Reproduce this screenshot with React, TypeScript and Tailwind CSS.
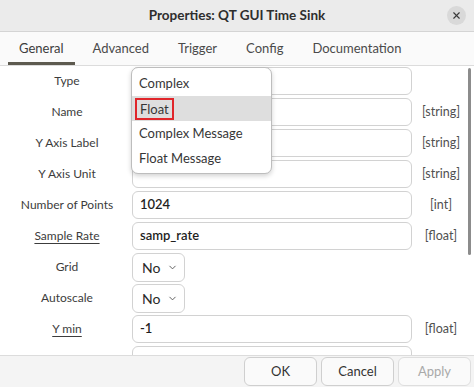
import { ChevronDown, X } from 'lucide-react'

type Row = {
  label: string
  kind: 'input' | 'select'
  value?: string
  tag?: string
  underline?: boolean
}

const rows: Row[] = [
  { label: 'Type', kind: 'input', value: '' },
  { label: 'Name', kind: 'input', value: '', tag: '[string]' },
  { label: 'Y Axis Label', kind: 'input', value: '', tag: '[string]' },
  { label: 'Y Axis Unit', kind: 'input', value: '', tag: '[string]' },
  { label: 'Number of Points', kind: 'input', value: '1024', tag: '[int]' },
  { label: 'Sample Rate', kind: 'input', value: 'samp_rate', tag: '[float]', underline: true },
  { label: 'Grid', kind: 'select', value: 'No' },
  { label: 'Autoscale', kind: 'select', value: 'No' },
  { label: 'Y min', kind: 'input', value: '-1', tag: '[float]', underline: true },
  // next row sits under the button bar, only the top of its field shows
  { label: '', kind: 'input', value: '' },
]

const tabs = ['General', 'Advanced', 'Trigger', 'Config', 'Documentation']

const menuItems = ['Complex', 'Float', 'Complex Message', 'Float Message']

export default function App() {
  return (
    <div className="w-[474px] h-[387px] flex flex-col overflow-hidden bg-white text-[12px] text-[#3c3c3c] font-['Lato','Noto_Sans',sans-serif]">
      {/* title bar */}
      <div className="h-[32px] shrink-0 flex items-center bg-[#ebebeb] border-b border-[#d4d4d4]">
        <div className="w-[40px]" />
        <div className="flex-1 text-center font-bold text-[13.5px] text-[#2e2e2e]">
          Properties: QT GUI Time Sink
        </div>
        <div className="w-[40px] flex justify-center pl-[4px]">
          <div className="w-[19px] h-[19px] rounded-full bg-[#d9d9d9] flex items-center justify-center">
            <X className="w-[11px] h-[11px] text-[#3a3a3a]" strokeWidth={2.5} />
          </div>
        </div>
      </div>

      {/* tabs */}
      <div className="h-[34px] shrink-0 flex items-stretch pl-[8px] gap-[7px] bg-[#fafafa] border-b border-[#dcdcdc]">
        {tabs.map((t, i) => (
          <div
            key={t}
            className={`px-[11px] flex items-center border-b-[3px] pt-[3px] text-[13px] ${
              i === 0 ? 'border-[#5d5a4f] text-[#3d3d3d]' : 'border-transparent text-[#4a4a4a]'
            }`}
          >
            {t}
          </div>
        ))}
      </div>

      {/* content */}
      <div className="relative flex-1 overflow-hidden pt-[1px]">
        <div className="flex flex-col gap-[3px]">
          {rows.map((r, i) => (
            <div key={i} className="flex items-center h-[28px]">
              <div className="w-[132px] pl-[2px] text-center">
                <span className={r.underline ? 'underline underline-offset-[3px]' : ''}>{r.label}</span>
              </div>
              {r.kind === 'input' ? (
                <div className="w-[280px] h-[28px] rounded-[6px] border border-[#d2d2d2] bg-white flex items-center px-[7px] text-[13px] text-[#1f1f1f] font-semibold">
                  {r.value}
                </div>
              ) : (
                <div className="w-[53px] h-[29px] rounded-[6px] border border-[#d2d2d2] bg-white flex items-center pl-[9px] gap-[7px] text-[#2a2a2a] text-[14px]">
                  {r.value}
                  <ChevronDown className="w-[11px] h-[11px] text-[#555]" strokeWidth={2} />
                </div>
              )}
              <div className="w-[58px] text-center text-[12.5px] text-[#505050]">{r.tag}</div>
            </div>
          ))}
        </div>

        {/* overlay scrollbar */}
        <div className="absolute left-[468px] top-[2px] w-[3px] h-[187px] rounded-full bg-[#8c8c8c]" />

        {/* dropdown menu */}
        <div className="absolute left-[131px] top-[1px] w-[141px] h-[107px] rounded-[7px] border border-[#bdbdbd] bg-white shadow-[0_2px_5px_rgba(0,0,0,0.18)] py-[3px] text-[13px] text-[#363636]">
          {menuItems.map((m) => (
            <div
              key={m}
              className={`h-[25px] flex items-center pl-[7px] ${m === 'Float' ? 'bg-[#dedede]' : ''}`}
            >
              {m === 'Float' ? (
                <span className="-ml-[4px] px-[3px] border-2 border-[#e0262b] leading-[18px]">{m}</span>
              ) : (
                m
              )}
            </div>
          ))}
        </div>
      </div>

      {/* bottom buttons */}
      <div className="h-[32px] shrink-0 flex items-center justify-end gap-[4px] pr-[3px] bg-[#f4f4f4] border-t border-[#dcdcdc]">
        <button className="w-[73px] h-[29px] rounded-[6px] border border-[#cfcfcf] bg-[#fafafa] text-[13px] text-[#333]">
          OK
        </button>
        <button className="w-[73px] h-[29px] rounded-[6px] border border-[#cfcfcf] bg-[#fafafa] text-[13px] text-[#333]">
          Cancel
        </button>
        <button className="w-[73px] h-[29px] rounded-[6px] border border-[#dedede] bg-[#fafafa] text-[13px] text-[#a9a9a9]">
          Apply
        </button>
      </div>
    </div>
  )
}
